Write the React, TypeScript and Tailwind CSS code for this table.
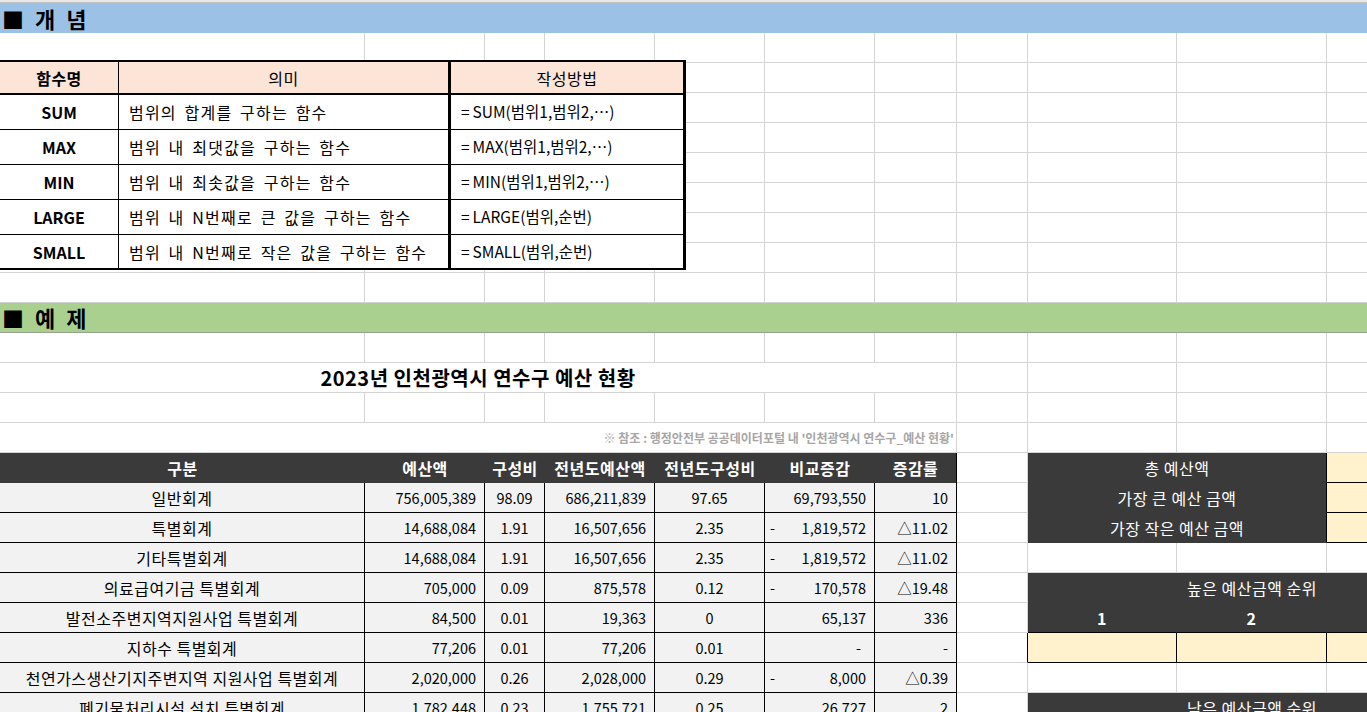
import { twMerge } from "tailwind-merge";
import type { ReactNode } from "react";

// column widths of the sheet (A..K)
const A = "w-[365px]";
const B = "w-[120px]";
const C = "w-[60px]";
const D = "w-[110px]";
const E = "w-[110px]";
const F = "w-[110px]";
const G = "w-[82px]";
const H = "w-[71px]";
const I = "w-[149px]";
const J = "w-[150px]";
const K = "w-[150px]";

const COLS = [A, B, C, D, E, F, G, H, I, J, K];

const FUNCS = [
  ["SUM", "범위의 합계를 구하는 함수", "SUM(범위1,범위2,⋯)"],
  ["MAX", "범위 내 최댓값을 구하는 함수", "MAX(범위1,범위2,⋯)"],
  ["MIN", "범위 내 최솟값을 구하는 함수", "MIN(범위1,범위2,⋯)"],
  ["LARGE", "범위 내 N번째로 큰 값을 구하는 함수", "LARGE(범위,순번)"],
  ["SMALL", "범위 내 N번째로 작은 값을 구하는 함수", "SMALL(범위,순번)"],
];

type Budget = {
  name: string;
  amt: string;
  ratio: string;
  prev: string;
  prevRatio: string;
  neg: boolean;
  diff: string;
  rate: string;
};

const ROWS: Budget[] = [
  { name: "일반회계", amt: "756,005,389", ratio: "98.09", prev: "686,211,839", prevRatio: "97.65", neg: false, diff: "69,793,550", rate: "10" },
  { name: "특별회계", amt: "14,688,084", ratio: "1.91", prev: "16,507,656", prevRatio: "2.35", neg: true, diff: "1,819,572", rate: "△11.02" },
  { name: "기타특별회계", amt: "14,688,084", ratio: "1.91", prev: "16,507,656", prevRatio: "2.35", neg: true, diff: "1,819,572", rate: "△11.02" },
  { name: "의료급여기금 특별회계", amt: "705,000", ratio: "0.09", prev: "875,578", prevRatio: "0.12", neg: true, diff: "170,578", rate: "△19.48" },
  { name: "발전소주변지역지원사업 특별회계", amt: "84,500", ratio: "0.01", prev: "19,363", prevRatio: "0", neg: false, diff: "65,137", rate: "336" },
  { name: "지하수 특별회계", amt: "77,206", ratio: "0.01", prev: "77,206", prevRatio: "0.01", neg: false, diff: "-", rate: "-" },
  { name: "천연가스생산기지주변지역 지원사업 특별회계", amt: "2,020,000", ratio: "0.26", prev: "2,028,000", prevRatio: "0.29", neg: true, diff: "8,000", rate: "△0.39" },
  { name: "폐기물처리시설 설치 특별회계", amt: "1,782,448", ratio: "0.23", prev: "1,755,721", prevRatio: "0.25", neg: false, diff: "26,727", rate: "2" },
];

function Cell({ w, className, children }: { w: string; className?: string; children?: ReactNode }) {
  return (
    <div
      className={twMerge(
        "flex h-full shrink-0 items-center border-r border-b border-[#d4d4d4]",
        w,
        className,
      )}
    >
      {children}
    </div>
  );
}

function BlankRow() {
  return (
    <div className="flex h-[30px]">
      {COLS.map((w, i) => (
        <Cell key={i} w={w} />
      ))}
    </div>
  );
}

function FuncTable() {
  return (
    <div className="flex h-[210px] w-[686px] flex-col border-t-2 border-r-[3px] border-b-2 border-black text-[16px] text-black">
      <div className="flex h-[33px] border-b-2 border-black bg-[#fce4d6]">
        <div className="flex w-[119px] items-center justify-center border-r border-black font-bold tracking-[0.5px]">함수명</div>
        <div className="flex w-[332px] items-center justify-center border-r-[3px] border-black tracking-[0.5px]">의미</div>
        <div className="flex flex-1 items-center justify-center tracking-[0.5px]">작성방법</div>
      </div>
      {FUNCS.map(([fn, desc, formula], i) => (
        <div
          key={fn}
          className={i < FUNCS.length - 1 ? "flex h-[35px] border-b border-black" : "flex h-[33px]"}
        >
          <div className="flex w-[119px] items-center justify-center border-r border-black font-bold">{fn}</div>
          <div className="flex w-[332px] items-center border-r-[3px] border-black pl-[10px] tracking-[1.2px] [word-spacing:3px]">
            {desc}
          </div>
          <div className="flex flex-1 items-center pl-[10px] text-[15.5px]">
            <span className="mr-[3px]">=</span>
            {formula}
          </div>
        </div>
      ))}
    </div>
  );
}

function RightPanel({ row }: { row: number }) {
  const dark = "border-[#3a3a3a] bg-[#3a3a3a] text-white justify-center text-[16px] tracking-[0.5px]";
  const cream = "bg-[#fff2cc] border-black";
  if (row === -1 || row === 0 || row === 1) {
    const label = row === -1 ? "총 예산액" : row === 0 ? "가장 큰 예산 금액" : "가장 작은 예산 금액";
    return (
      <>
        <Cell w={H} />
        <Cell w="w-[299px]" className={twMerge(dark, "border-r-black border-b-[#3a3a3a]")}>{label}</Cell>
        <Cell w={K} className={cream} />
      </>
    );
  }
  if (row === 3 || row === 7) {
    return (
      <>
        <Cell w={H} />
        <Cell w="w-[449px]" className={dark}>
          {row === 3 ? "높은 예산금액 순위" : "낮은 예산금액 순위"}
        </Cell>
      </>
    );
  }
  if (row === 4) {
    return (
      <>
        <Cell w={H} />
        <Cell w={I} className={twMerge(dark, "border-b-black font-bold")}>1</Cell>
        <Cell w={J} className={twMerge(dark, "border-b-black font-bold")}>2</Cell>
        <Cell w={K} className={twMerge(dark, "border-b-black")} />
      </>
    );
  }
  if (row === 5) {
    return (
      <>
        <Cell w={H} className="border-r-black" />
        <Cell w={I} className={cream} />
        <Cell w={J} className={cream} />
        <Cell w={K} className={cream} />
      </>
    );
  }
  return (
    <>
      <Cell w={H} />
      <Cell w={I} />
      <Cell w={J} />
      <Cell w={K} />
    </>
  );
}

function DataRow({ r, i }: { r: Budget; i: number }) {
  const b = "border-black bg-[#f2f2f2]";
  return (
    <div className="flex h-[30px]">
      <Cell w={A} className={twMerge(b, "justify-center text-[16px] tracking-[0.5px]")}>{r.name}</Cell>
      <Cell w={B} className={twMerge(b, "justify-end pr-[8px]")}>{r.amt}</Cell>
      <Cell w={C} className={twMerge(b, "justify-center")}>{r.ratio}</Cell>
      <Cell w={D} className={twMerge(b, "justify-end pr-[8px]")}>{r.prev}</Cell>
      <Cell w={E} className={twMerge(b, "justify-center")}>{r.prevRatio}</Cell>
      <Cell w={F} className={twMerge(b, "justify-between pl-[5px] pr-[8px]")}>
        <span>{r.neg ? "-" : ""}</span>
        <span className={r.diff === "-" ? "pr-[5px]" : ""}>{r.diff}</span>
      </Cell>
      <Cell w={G} className={twMerge(b, "justify-end pr-[8px]")}>{r.rate}</Cell>
      <RightPanel row={i} />
    </div>
  );
}

export default function App() {
  return (
    <div className="h-[712px] w-[1367px] overflow-hidden bg-white font-['Malgun_Gothic','Noto_Sans_CJK_KR',sans-serif] text-[14.5px] text-black">
      <div className="h-[3px] border-b border-[#c4c4c4] bg-[#e8e8e8]" />
      <div className="flex h-[30px] items-center bg-[#9bc2e6] pl-[2px] text-[22px] font-bold tracking-[3px]">■ 개 념</div>

      {/* concept table over rows 2-9 */}
      <div className="flex h-[240px]">
        <div className="flex w-[686px] shrink-0 flex-col">
          <div className="flex h-[27px]">
            <div className="w-[365px] border-r border-[#d4d4d4]" />
            <div className="w-[120px] border-r border-[#d4d4d4]" />
            <div className="w-[60px] border-r border-[#d4d4d4]" />
            <div className="w-[110px] border-r border-[#d4d4d4]" />
            <div className="w-[31px]" />
          </div>
          <FuncTable />
          <div className="flex h-[3px]">
            <div className="w-[365px] border-r border-b border-[#d4d4d4]" />
            <div className="w-[120px] border-r border-b border-[#d4d4d4]" />
            <div className="w-[60px] border-r border-b border-[#d4d4d4]" />
            <div className="w-[110px] border-r border-b border-[#d4d4d4]" />
            <div className="w-[31px] border-b border-[#d4d4d4]" />
          </div>
        </div>
        <div className="flex flex-col">
          {Array.from({ length: 8 }).map((_, i) => (
            <div key={i} className="flex h-[30px]">
              <Cell w="w-[79px]" />
              <Cell w={F} />
              <Cell w={G} />
              <Cell w={H} />
              <Cell w={I} />
              <Cell w={J} />
              <Cell w={K} />
            </div>
          ))}
        </div>
      </div>

      <BlankRow />
      <div className="border-b border-[#98a08f]">
        <div className="flex h-[29px] items-center bg-[#a9d08e] pl-[2px] text-[22px] font-bold tracking-[3px]">
          ■ 예 제
        </div>
      </div>
      <BlankRow />

      {/* title */}
      <div className="flex h-[30px]">
        <Cell w="w-[957px]" className="justify-center text-[20px] font-bold tracking-[0.5px]">
          2023년 인천광역시 연수구 예산 현황
        </Cell>
        <Cell w={H} />
        <Cell w={I} />
        <Cell w={J} />
        <Cell w={K} />
      </div>
      <BlankRow />
      <div className="flex h-[30px]">
        <Cell w="w-[957px]" className="justify-end pr-[2px] pt-[1px] text-[12px] font-bold text-[#a6a6a6]">
          ※ 참조 : 행정안전부 공공데이터포털 내 '인천광역시 연수구_예산 현황'
        </Cell>
        <Cell w={H} />
        <Cell w={I} />
        <Cell w={J} />
        <Cell w={K} />
      </div>

      {/* header */}
      <div className="flex h-[30px]">
        <div className="flex h-full w-[957px] shrink-0 border-r border-black bg-[#3a3a3a] text-[16px] font-bold tracking-[0.5px] text-white">
          <div className="flex w-[365px] items-center justify-center">구분</div>
          <div className="flex w-[120px] items-center justify-center">예산액</div>
          <div className="flex w-[60px] items-center justify-center">구성비</div>
          <div className="flex w-[110px] items-center justify-center">전년도예산액</div>
          <div className="flex w-[110px] items-center justify-center">전년도구성비</div>
          <div className="flex w-[110px] items-center justify-center">비교증감</div>
          <div className="flex w-[81px] items-center justify-center">증감률</div>
        </div>
        <RightPanel row={-1} />
      </div>
      {ROWS.map((r, i) => (
        <DataRow key={i} r={r} i={i} />
      ))}
    </div>
  );
}
